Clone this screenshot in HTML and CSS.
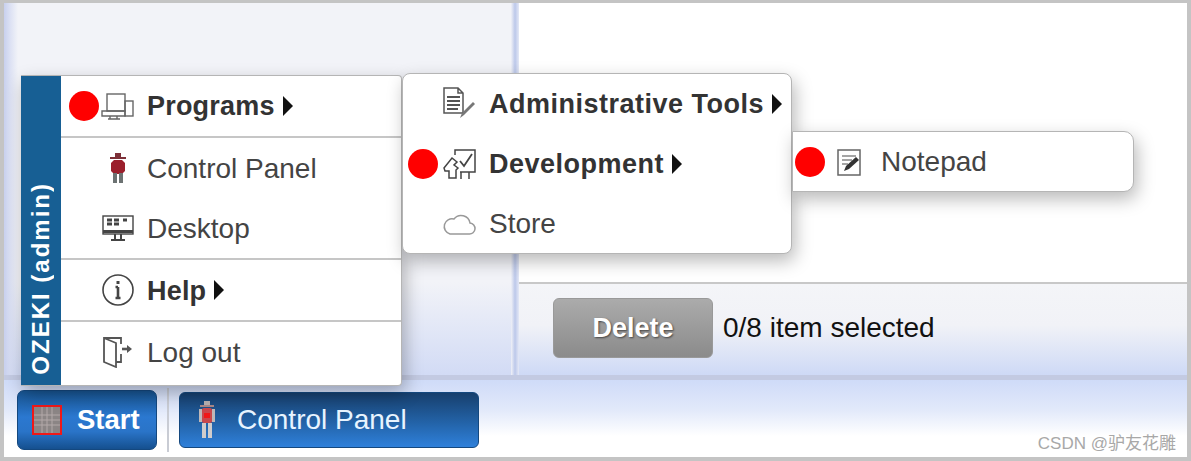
FILE: index.html
```html
<!DOCTYPE html>
<html lang="en">
<head>
    <meta charset="UTF-8">
    <title>OZEKI Start Menu</title>
    <link rel="stylesheet" href="styles.css">
</head>
<body>
    <div class="screen">
        <div class="workspace">
            <div class="sidebar"></div>
            <div class="divider"></div>
            <div class="content">
                <div class="list-area"></div>
                <div class="toolbar">
                    <button class="btn-delete">Delete</button>
                    <span class="selection">0/8 item selected</span>
                </div>
            </div>
        </div>

        <div class="taskbar">
            <button class="btn-start">
                <svg width="32" height="32" viewBox="0 0 32 32">
                    <rect x="2" y="2" width="28" height="28" fill="#8b8585" stroke="#f01818" stroke-width="2"/>
                    <path d="M11 3v26M16 3v26M21 3v26M3 11h26M3 16h26M3 21h26" stroke="#b3a9a9" stroke-width="1" fill="none"/>
                </svg>
                <span>Start</span>
            </button>
            <div class="task-sep"></div>
            <button class="btn-task">
                <svg width="24" height="40" viewBox="0 0 24 40">
                    <rect x="9" y="1" width="6" height="4" fill="#b8b0b0"/>
                    <rect x="5" y="5" width="14" height="2" fill="#a88"/>
                    <rect x="7" y="8" width="10" height="15" rx="2" fill="#c9484c"/>
                    <rect x="9" y="13" width="6" height="5" fill="#f01818"/>
                    <rect x="4" y="9" width="3" height="13" fill="#c0b8b8"/>
                    <rect x="17" y="9" width="3" height="13" fill="#c0b8b8"/>
                    <rect x="7" y="23" width="4" height="15" fill="#d0cccc"/>
                    <rect x="13" y="23" width="4" height="15" fill="#d0cccc"/>
                </svg>
                <span>Control Panel</span>
            </button>
            <div class="watermark">CSDN @驴友花雕</div>
        </div>

        <!-- start menu -->
        <div class="menu menu-main">
            <div class="menu-brand"><span>OZEKI (admin)</span></div>
            <div class="menu-rows">
                <div class="menu-group">
                    <div class="menu-row bold">
                        <i class="dot dot-main"></i>
                        <svg class="ico" width="34" height="28" viewBox="0 0 34 28" fill="none" stroke="#666" stroke-width="1.4">
                            <rect x="6" y="2" width="18" height="17"/>
                            <path d="M1 24v-5h23v5zM9 24v3M16 24v3M7 27h12"/>
                            <rect x="24" y="9" width="8" height="15"/>
                        </svg>
                        <span>Programs</span><i class="arrow"></i>
                    </div>
                </div>
                <div class="menu-group">
                    <div class="menu-row">
                        <svg class="ico" width="34" height="32" viewBox="0 0 34 32">
                            <rect x="14" y="1" width="6" height="4" fill="#7d3038"/>
                            <rect x="9" y="5" width="16" height="2" fill="#7d3038"/>
                            <path d="M13 8h8l3 3v8l-3 3h-8l-3-3v-8z" fill="#9b1f2c"/>
                            <rect x="12" y="21" width="4" height="10" fill="#6c7272"/>
                            <rect x="18" y="21" width="4" height="10" fill="#6c7272"/>
                        </svg>
                        <span>Control Panel</span>
                    </div>
                    <div class="menu-row">
                        <svg class="ico" width="34" height="28" viewBox="0 0 34 28" fill="none" stroke="#444" stroke-width="1.4">
                            <rect x="2" y="2" width="30" height="18"/>
                            <path d="M2 17.500h30" stroke-width="3"/>
                            <path d="M6 6h5M13 6h5M22 6h4M6 10h5M13 10h5" stroke-width="3"/>
                            <path d="M14 20v5M20 20v5M10 26h14" stroke-width="2"/>
                        </svg>
                        <span>Desktop</span>
                    </div>
                </div>
                <div class="menu-group">
                    <div class="menu-row bold">
                        <svg class="ico" width="34" height="34" viewBox="0 0 34 34" fill="none" stroke="#444">
                            <circle cx="17" cy="17" r="15" stroke-width="1.6"/>
                            <path d="M17 14v11M14.500 14H17M14.500 25h5" stroke-width="2.6"/>
                            <path d="M17 8v3" stroke-width="3"/>
                        </svg>
                        <span>Help</span><i class="arrow"></i>
                    </div>
                </div>
                <div class="menu-group">
                    <div class="menu-row">
                        <svg class="ico" width="34" height="32" viewBox="0 0 34 32" fill="none" stroke="#555" stroke-width="1.8">
                            <path d="M20 8V2H3v24l12 5V7L3 2"/>
                            <path d="M15 26h5V18"/>
                            <path d="M21 13h6" stroke-width="2.600"/>
                            <path d="M26 9l5 4-5 4z" fill="#555" stroke="none"/>
                        </svg>
                        <span>Log out</span>
                    </div>
                </div>
            </div>
        </div>

        <!-- programs submenu -->
        <div class="menu menu-programs">
            <div class="menu-row bold">
                <svg class="ico" width="34" height="34" viewBox="0 0 34 34" fill="none" stroke="#555" stroke-width="1.5">
                    <path d="M2 1h14l5 5v20H2zM16 1v5h5"/>
                    <path d="M5 10h13M5 14h13M5 18h13M5 22h11" stroke-width="1.8"/>
                    <path d="M18 31l2-5 11-11 2 2-11 11z" fill="#777" stroke="none"/>
                </svg>
                <span class="wide">Administrative Tools</span><i class="arrow"></i>
            </div>
            <div class="menu-row bold">
                <i class="dot dot-programs"></i>
                <svg class="ico" width="34" height="34" viewBox="0 0 34 34" fill="none" stroke="#444" stroke-width="1.5">
                    <path d="M13 8V3h20v22H18"/>
                    <path d="M18 14l4 5 8-12" stroke-width="1.800"/>
                    <path d="M2 21l8-10 5 4-3 3 4 3-2 2v8H7v-7H3z"/>
                    <path d="M19 25v7M27 25v7"/>
                </svg>
                <span class="wide">Development</span><i class="arrow"></i>
            </div>
            <div class="menu-row">
                <svg class="ico" width="34" height="24" viewBox="0 0 34 24" fill="none" stroke="#999" stroke-width="1.500">
                    <path d="M8 22h19a5.500 5.500 0 0 0 1-11A9 9 0 0 0 12 7a7.500 7.500 0 0 0-4 15z"/>
                </svg>
                <span>Store</span>
            </div>
        </div>

        <!-- development submenu -->
        <div class="menu menu-dev">
            <div class="menu-row">
                <i class="dot dot-dev"></i>
                <svg class="ico ico-note" width="26" height="28" viewBox="0 0 26 28" fill="none" stroke="#666" stroke-width="1.5">
                    <rect x="2" y="2" width="22" height="25"/>
                    <path d="M6 8h14M6 12h10M6 16h6" stroke="#888"/>
                    <path d="M8 23l2-5 10-9 3 3-10 9z" fill="#333" stroke="none"/>
                </svg>
                <span>Notepad</span>
            </div>
        </div>
    </div>
</body>
</html>
```

FILE: styles.css
```css
* {
    box-sizing: border-box;
}

body {
    margin: 0;
    width: 1191px;
    height: 461px;
    overflow: hidden;
    font-family: "Liberation Sans", Arial, sans-serif;
}

i {
    display: block;
}

.screen {
    position: relative;
    width: 1191px;
    height: 461px;
    border: 4px solid #c4c4c4;
    border-top-width: 3px;
    background-color: #fff;
    display: flex;
    flex-direction: column;
}

.workspace {
    height: 372px;
    display: flex;
}

.sidebar {
    width: 507px;
    background:
        linear-gradient(to right, #c8d0ee 0, rgba(214, 220, 242, 0.8) 6px, rgba(240, 241, 247, 0) 14px),
        linear-gradient(to bottom, #f2f3f8 0, #f2f3f8 75%, #d2dbf5 100%);
}

.divider {
    width: 8px;
    background: linear-gradient(to right, #f0f1f7, #bcc8ea 50%, #e4e8f6);
}

.content {
    flex: 1;
    display: flex;
    flex-direction: column;
}

.list-area {
    height: 281px;
    background-color: #fff;
    border-bottom: 2px solid #c8c8c8;
}

.toolbar {
    flex: 1;
    display: flex;
    align-items: center;
    gap: 10px;
    padding: 0 0 3px 34px;
    background: linear-gradient(to bottom, #f4f5f8 0, #f1f2f7 45%, #ced9f6 100%);
}

.btn-delete {
    width: 160px;
    height: 60px;
    border: 1px solid #999;
    border-radius: 6px;
    background: linear-gradient(to bottom, #ababab, #8b8b8b);
    color: #fff;
    font: bold 27px "Liberation Sans", Arial, sans-serif;
    text-shadow: 1px 1px 2px #444;
}

.selection {
    color: #111;
    font-size: 28px;
}

.taskbar {
    flex: 1;
    display: flex;
    align-items: center;
    padding: 2px 0 0 13px;
    border-top: 5px solid #c3cae2;
    background: linear-gradient(to bottom, #cfdbf8 0, #e2e9fa 30px, #fff 56px);
}

.btn-start {
    width: 140px;
    height: 60px;
    display: flex;
    align-items: center;
    gap: 14px;
    padding: 0 0 0 13px;
    border: 1px solid #14487f;
    border-radius: 7px;
    background: linear-gradient(to bottom, #17538f 0, #2b78d0 45%, #2a74c8 70%, #15508f 100%);
    color: #fff;
    font: bold 27.500px "Liberation Sans", Arial, sans-serif;
}

.task-sep {
    width: 2px;
    height: 64px;
    margin: 0 10px;
    background-color: #c9ccd4;
}

.btn-task {
    width: 300px;
    height: 56px;
    display: flex;
    align-items: center;
    gap: 18px;
    padding: 0 0 0 15px;
    border: 1px solid #14487f;
    border-radius: 6px;
    background: linear-gradient(to bottom, #173f6d 0, #2363a8 55%, #2f80da 100%);
    color: #e8f4ff;
    font: 28px "Liberation Sans", Arial, sans-serif;
}

.watermark {
    margin-left: auto;
    align-self: flex-end;
    padding: 0 11px 3px 0;
    color: #a8a8a8;
    font: 17px "Liberation Sans", "Noto Sans CJK SC", sans-serif;
}

/* menus float over the page */
.menu {
    position: absolute;
    background-color: #fff;
    border: 1px solid #b5b5b5;
    box-shadow: 3px 7px 18px rgba(0, 0, 0, 0.28);
    color: #444;
}

.menu-main {
    left: 17px;
    top: 72px;
    width: 381px;
    height: 311px;
    display: flex;
    border-left: 0;
    border-radius: 0 4px 4px 0;
}

.menu-programs {
    left: 398px;
    top: 70px;
    width: 390px;
    height: 181px;
    border-radius: 8px;
}

.menu-dev {
    left: 788px;
    top: 128px;
    width: 342px;
    height: 61px;
    border-radius: 0 10px 10px 0;
}

.menu-brand {
    width: 40px;
    background-color: #175f94;
    color: #fff;
    display: flex;
    align-items: flex-end;
    justify-content: center;
    padding-bottom: 10px;
    font-weight: bold;
    font-size: 24px;
}

.menu-brand span {
    writing-mode: vertical-rl;
    transform: rotate(180deg);
    white-space: nowrap;
    letter-spacing: 2px;
}

.menu-rows {
    flex: 1;
    display: flex;
    flex-direction: column;
}

.menu-group {
    border-bottom: 2px solid #c6c6c6;
}

.menu-group:last-child {
    border-bottom: 0;
}

.menu-group + .menu-group .menu-row span {
    padding-top: 2px;
}

.menu-row {
    position: relative;
    height: 60px;
    display: flex;
    align-items: center;
    padding-left: 40px;
    font-size: 28px;
    white-space: nowrap;
}

.menu-programs .menu-row {
    padding-left: 39px;
}

.menu-dev .menu-row {
    padding-left: 43px;
}

.menu-row.bold {
    font-weight: bold;
    color: #333;
    font-size: 27px;
    letter-spacing: 0.200px;
}

.ico {
    flex: none;
    margin-right: 12px;
}

.menu-programs .ico {
    margin-right: 13px;
}

.menu-dev .ico-note {
    margin-right: 19px;
}

.wide {
    letter-spacing: 0.500px;
}

.arrow {
    width: 0;
    height: 0;
    margin-left: 8px;
    border-left: 10px solid #111;
    border-top: 10px solid transparent;
    border-bottom: 10px solid transparent;
}

.dot {
    position: absolute;
    top: 15px;
    width: 30px;
    height: 30px;
    border-radius: 50%;
    background-color: #ff0000;
}

.dot-main {
    left: 8px;
}

.dot-programs {
    left: 5px;
}

.dot-dev {
    left: 2px;
}
```
